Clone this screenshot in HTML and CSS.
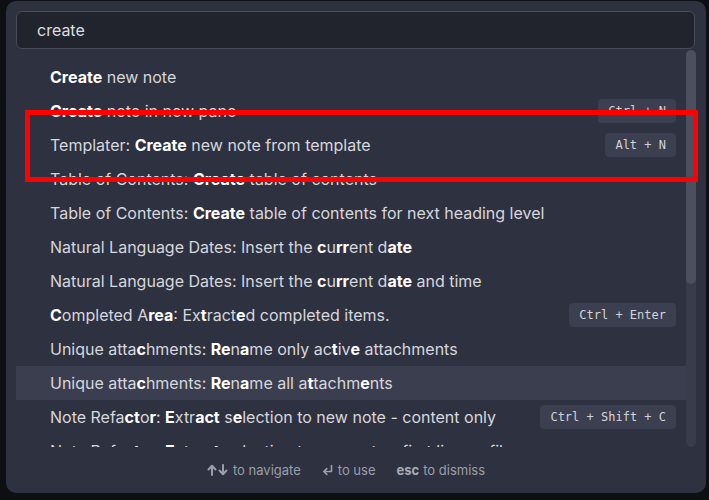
FILE: index.html
```html
<!DOCTYPE html>
<html>
<head>
<meta charset="utf-8">
<link rel="stylesheet" href="styles.css">
</head>
<body>
<div class="modal">
  <div class="search"><span class="query">create</span></div>
  <div class="results">
    <div class="list">
      <div class="item"><span class="title"><b>Create</b> new note</span></div>
      <div class="item"><span class="title"><b>Create</b> note in new pane</span><kbd>Ctrl + N</kbd></div>
      <div class="item"><span class="title">Templater: <b>Create</b> new note from template</span><kbd>Alt + N</kbd></div>
      <div class="item"><span class="title">Table of Contents: <b>Create</b> table of contents</span></div>
      <div class="item"><span class="title">Table of Contents: <b>Create</b> table of contents for next heading level</span></div>
      <div class="item"><span class="title">Natural Language Dates: Insert the <b>c</b>u<b>rr</b>ent d<b>ate</b></span></div>
      <div class="item"><span class="title">Natural Language Dates: Insert the <b>c</b>u<b>rr</b>ent d<b>ate</b> and time</span></div>
      <div class="item"><span class="title"><b>C</b>ompleted A<b>rea</b>: Ex<b>t</b>ract<b>e</b>d completed items.</span><kbd>Ctrl + Enter</kbd></div>
      <div class="item"><span class="title">Unique atta<b>c</b>hments: <b>Re</b>n<b>a</b>me only ac<b>t</b>iv<b>e</b> attachments</span></div>
      <div class="item selected"><span class="title">Unique atta<b>c</b>hments: <b>Re</b>n<b>a</b>me all a<b>t</b>tachm<b>e</b>nts</span></div>
      <div class="item"><span class="title">Note Refa<b>ct</b>o<b>r</b>: <b>E</b>xtr<b>act</b> s<b>e</b>lection to new note - content only</span><kbd>Ctrl + Shift + C</kbd></div>
      <div class="item"><span class="title">Note Refa<b>ct</b>o<b>r</b>: <b>E</b>xtr<b>act</b> s<b>e</b>lection to new note - first line as file name</span></div>
    </div>
    <div class="scrollbar"><div class="thumb"></div></div>
  </div>
  <div class="footer">
    <span class="hint"><svg class="arrows" width="22" height="12" viewBox="0 0 22 12"><path d="M5 11V2.5M1.5 5.5L5 1.8 8.5 5.5" fill="none" stroke="currentColor" stroke-width="2" stroke-linecap="round" stroke-linejoin="round"/><path d="M16 1V9.5M12.5 6.5L16 10.2 19.5 6.5" fill="none" stroke="currentColor" stroke-width="2" stroke-linecap="round" stroke-linejoin="round"/></svg>to navigate</span>
    <span class="hint"><svg class="enter" width="11" height="12" viewBox="0 0 11 12"><path d="M9.5 1.5V7.5H2M4.8 4.6L1.8 7.5 4.8 10.4" fill="none" stroke="currentColor" stroke-width="1.6" stroke-linecap="round" stroke-linejoin="round"/></svg>to use</span>
    <span class="hint"><b>esc</b> to dismiss</span>
  </div>
</div>
<div class="annotation"></div>
</body>
</html>
```

FILE: styles.css
```css
html, body {
  margin: 0;
  padding: 0;
}

body {
  width: 709px;
  height: 500px;
  background: #0e0f12;
  font-family: Inter, "Noto Sans", sans-serif;
  overflow: hidden;
  position: relative;
}

.modal {
  margin: 1px 0 0 6px;
  width: 700px;
  height: 492px;
  background: #2e3140;
  border-radius: 10px;
  box-sizing: border-box;
  padding: 10px 10px 0 10px;
  display: flex;
  flex-direction: column;
}

.search {
  height: 38px;
  box-sizing: border-box;
  border: 1px solid #464a59;
  border-radius: 6px;
  background: #22242d;
  display: flex;
  align-items: center;
  padding-left: 20px;
  margin-right: 1px;
}

.query {
  color: #dcdde0;
  font-size: 16px;
}

.results {
  display: flex;
  height: 397px;
  margin-top: 1px;
}

.list {
  flex: 1;
  overflow: hidden;
  padding-top: 10px;
}

.item {
  height: 34px;
  display: flex;
  align-items: center;
  justify-content: space-between;
  padding: 0 10px 0 34px;
  color: #d6d7dc;
  font-size: 16px;
  white-space: nowrap;
}

.item b {
  color: #ffffff;
  font-weight: 700;
}

.item.selected {
  background: #3b3e4f;
}

kbd {
  font-family: "DejaVu Sans Mono", "Liberation Mono", monospace;
  font-size: 12px;
  color: #d2d3d8;
  background: #3c3f50;
  border-radius: 4px;
  height: 24px;
  line-height: 24px;
  padding: 0 10px;
}

.scrollbar {
  width: 10px;
  background: #393c4a;
  border-radius: 5px;
  margin-right: 0;
}

.thumb {
  height: 234px;
  background: #4c4f5e;
  border-radius: 5px;
}

.footer {
  flex: 1;
  display: flex;
  justify-content: center;
  align-items: center;
  gap: 21px;
  padding-right: 20px;
  padding-bottom: 1px;
  color: #9c9ea8;
  font-size: 13px;
}

.hint {
  display: flex;
  align-items: center;
}

.hint b {
  color: #a9abb4;
  font-weight: 700;
  margin-right: 4px;
}

.arrows {
  margin-right: 4px;
}

.enter {
  margin-right: 5px;
}

.annotation {
  position: absolute;
  left: 25px;
  top: 110px;
  width: 673px;
  height: 72px;
  box-sizing: border-box;
  border: 5px solid #ff0000;
}
```
